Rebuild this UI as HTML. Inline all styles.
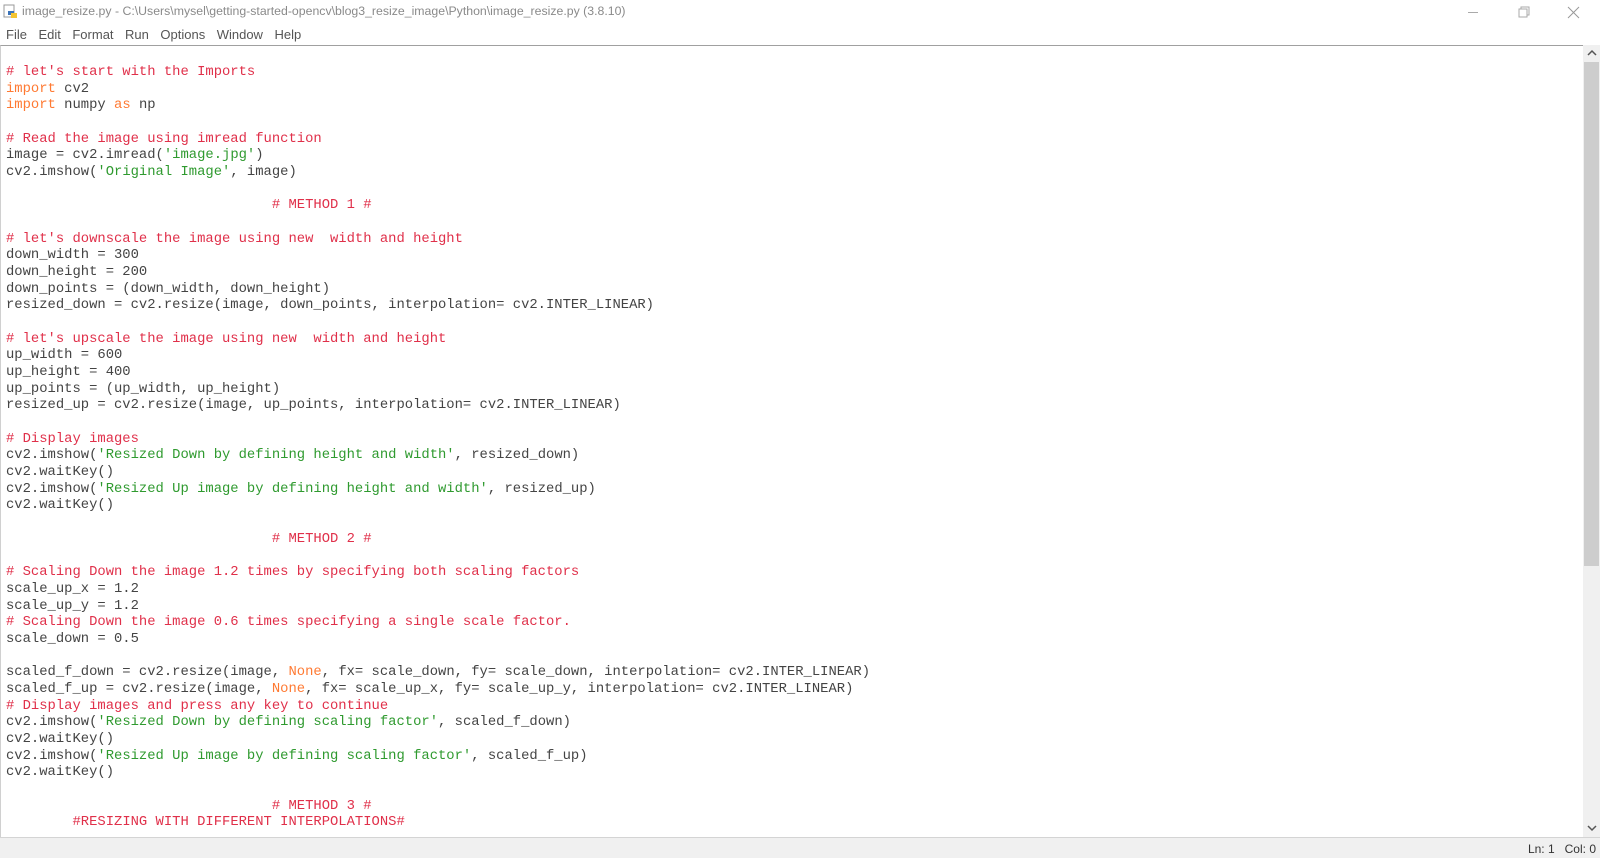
<!DOCTYPE html>
<html><head><meta charset="utf-8"><style>
*{margin:0;padding:0;box-sizing:border-box}
body{width:1600px;height:858px;background:#fff;position:relative;overflow:hidden;font-family:"Liberation Sans",sans-serif}
.title{position:absolute;left:22px;top:4px;font-size:12.3px;color:#8a8a8a;white-space:nowrap}
.menu{position:absolute;left:6px;top:27px;font-size:13px;color:#555;white-space:nowrap}
.menu span{margin-right:11.5px}
.ed{position:absolute;left:0;top:45px;width:1583px;height:792px;border-top:1px solid #a0a0a0;border-left:1px solid #d0d0d0}
pre{position:absolute;left:6px;top:64px;font-family:"Liberation Mono",monospace;font-size:13.85px;line-height:16.67px;color:#444}
.c{color:#e0304a}.k{color:#ff7a33}.s{color:#2f9a2f}
.sb{position:absolute;left:1583px;top:45px;width:17px;height:792px;background:#f0f0f0}
.th{position:absolute;left:1584px;top:62px;width:15px;height:504px;background:#cdcdcd}
.status{position:absolute;left:0;top:837px;width:1600px;height:21px;background:#f0f0f0;border-top:1px solid #d4d4d4}
.st{position:absolute;right:4px;top:842px;font-size:12px;color:#333}
</style></head><body>
<svg style="position:absolute;left:3px;top:4px" width="15" height="15"><rect x="1" y="1" width="10" height="12" fill="#fff" stroke="#999"/><path d="M5 7h6v4H5z" fill="#3b73b9"/><path d="M8 9h6v5H8z" fill="#f4c430"/></svg>
<div class="title">image_resize.py - C:\Users\mysel\getting-started-opencv\blog3_resize_image\Python\image_resize.py (3.8.10)</div>
<svg style="position:absolute;left:1468px;top:6px" width="132" height="16"><path d="M0 6.5h10" stroke="#aaa"/><rect x="51" y="3" width="8" height="8" fill="none" stroke="#aaa"/><path d="M53 3V1h8v8h-2" fill="none" stroke="#aaa"/><path d="M100 1l11 11M111 1l-11 11" stroke="#999"/></svg>
<div class="menu"><span>File</span><span>Edit</span><span>Format</span><span>Run</span><span>Options</span><span>Window</span><span>Help</span></div>
<div class="ed"></div>
<pre><span class="c"># let's start with the Imports</span>
<span class="k">import</span> cv2
<span class="k">import</span> numpy <span class="k">as</span> np

<span class="c"># Read the image using imread function</span>
image = cv2.imread(<span class="s">'image.jpg'</span>)
cv2.imshow(<span class="s">'Original Image'</span>, image)

                                <span class="c"># METHOD 1 #</span>

<span class="c"># let's downscale the image using new  width and height</span>
down_width = 300
down_height = 200
down_points = (down_width, down_height)
resized_down = cv2.resize(image, down_points, interpolation= cv2.INTER_LINEAR)

<span class="c"># let's upscale the image using new  width and height</span>
up_width = 600
up_height = 400
up_points = (up_width, up_height)
resized_up = cv2.resize(image, up_points, interpolation= cv2.INTER_LINEAR)

<span class="c"># Display images</span>
cv2.imshow(<span class="s">'Resized Down by defining height and width'</span>, resized_down)
cv2.waitKey()
cv2.imshow(<span class="s">'Resized Up image by defining height and width'</span>, resized_up)
cv2.waitKey()

                                <span class="c"># METHOD 2 #</span>

<span class="c"># Scaling Down the image 1.2 times by specifying both scaling factors</span>
scale_up_x = 1.2
scale_up_y = 1.2
<span class="c"># Scaling Down the image 0.6 times specifying a single scale factor.</span>
scale_down = 0.5

scaled_f_down = cv2.resize(image, <span class="k">None</span>, fx= scale_down, fy= scale_down, interpolation= cv2.INTER_LINEAR)
scaled_f_up = cv2.resize(image, <span class="k">None</span>, fx= scale_up_x, fy= scale_up_y, interpolation= cv2.INTER_LINEAR)
<span class="c"># Display images and press any key to continue</span>
cv2.imshow(<span class="s">'Resized Down by defining scaling factor'</span>, scaled_f_down)
cv2.waitKey()
cv2.imshow(<span class="s">'Resized Up image by defining scaling factor'</span>, scaled_f_up)
cv2.waitKey()

                                <span class="c"># METHOD 3 #</span>
        <span class="c">#RESIZING WITH DIFFERENT INTERPOLATIONS#</span></pre>
<div class="sb"></div>
<div class="th"></div>
<svg style="position:absolute;left:1586px;top:48px" width="12" height="10"><path d="M2 7l4-4 4 4" fill="none" stroke="#555" stroke-width="1.5"/></svg>
<svg style="position:absolute;left:1586px;top:823px" width="12" height="10"><path d="M2 3l4 4 4-4" fill="none" stroke="#555" stroke-width="1.5"/></svg>
<div class="status"></div>
<div class="st">Ln: 1&nbsp;&nbsp;&nbsp;Col: 0</div>
</body></html>
